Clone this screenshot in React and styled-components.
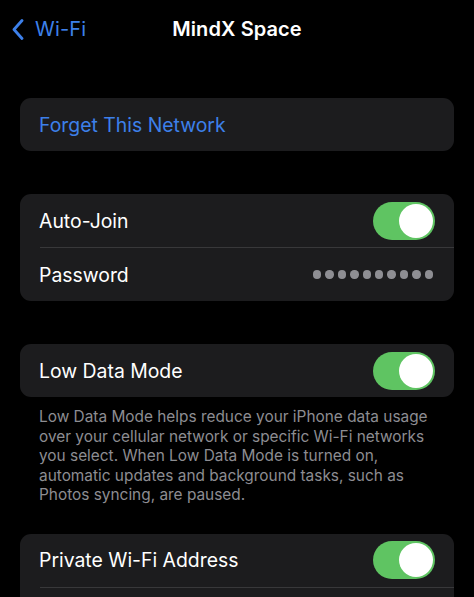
import React from 'react';
import styled, { createGlobalStyle } from 'styled-components';

const GlobalStyle = createGlobalStyle`
    html, body {
        margin: 0;
        padding: 0;
        background: #000;
    }
    body {
        font-family: Inter, "Noto Sans", "Liberation Sans", sans-serif;
        color: #fff;
        -webkit-font-smoothing: antialiased;
    }
`;

const Screen = styled.div`
    width: 474px;
    height: 597px;
    overflow: hidden;
    background: #000;
`;

const NavBar = styled.div`
    height: 58px;
    display: grid;
    grid-template-columns: 1fr auto 1fr;
    align-items: center;
    padding: 0 12px;
`;

const BackLink = styled.div`
    display: flex;
    align-items: center;
    gap: 11px;
    color: #3d80ea;
    font-size: 20px;
    letter-spacing: 0.2px;
`;

const Title = styled.div`
    font-size: 20px;
    font-weight: 600;
    letter-spacing: 0.1px;
`;

const Content = styled.div`
    padding: 40px 20px 0;
    display: flex;
    flex-direction: column;
`;

const Group = styled.div`
    margin-bottom: ${p => p.$gap || 43}px;
`;

const Card = styled.div`
    background: #1c1c1e;
    border-radius: 11px;
    overflow: hidden;
`;

const Row = styled.div`
    height: 53px;
    display: flex;
    align-items: center;
    justify-content: space-between;
    padding: 0 19px;
    font-size: 19.4px;
    color: ${p => (p.$action ? '#3d80ea' : '#fff')};
`;

const Divider = styled.div`
    height: 1px;
    margin-left: 20px;
    background: #38383a;
`;

const Toggle = styled.div`
    width: 62px;
    height: 38px;
    border-radius: 19px;
    background: #5fc462;
    position: relative;
    flex-shrink: 0;

    &::after {
        content: '';
        position: absolute;
        top: 2px;
        right: 2px;
        width: 34px;
        height: 34px;
        border-radius: 50%;
        background: #fff;
    }
`;

const Dots = styled.div`
    display: flex;
    gap: 4px;
    margin-right: 2px;
`;

const Dot = styled.span`
    width: 8.4px;
    height: 8.4px;
    border-radius: 50%;
    background: #8e8e93;
`;

const Footnote = styled.p`
    margin: 0;
    padding: 10px 19px 0;
    font-size: 15.4px;
    line-height: 19.5px;
    color: #8d8d92;
`;

const Chevron = () => (
    <svg width="12" height="21" viewBox="0 0 12 21" fill="none">
        <path d="M10 1.5L2 10.5L10 19.5" stroke="#3d80ea" strokeWidth="2.8" strokeLinecap="round" strokeLinejoin="round" />
    </svg>
);

const App = () => {
    return (
        <>
            <GlobalStyle />
            <Screen>
                <NavBar>
                    <BackLink>
                        <Chevron />
                        Wi-Fi
                    </BackLink>
                    <Title>MindX Space</Title>
                    <div />
                </NavBar>
                <Content>
                    <Group>
                        <Card>
                            <Row $action>Forget This Network</Row>
                        </Card>
                    </Group>

                    <Group>
                        <Card>
                            <Row>
                                Auto-Join
                                <Toggle />
                            </Row>
                            <Divider />
                            <Row>
                                Password
                                <Dots>
                                    {Array.from({ length: 10 }).map((_, i) => <Dot key={i} />)}
                                </Dots>
                            </Row>
                        </Card>
                    </Group>

                    <Group $gap={29}>
                        <Card>
                            <Row>
                                Low Data Mode
                                <Toggle />
                            </Row>
                        </Card>
                        <Footnote>
                            Low Data Mode helps reduce your iPhone data usage over your cellular network or specific Wi-Fi networks you select. When Low Data Mode is turned on, automatic updates and background tasks, such as Photos syncing, are paused.
                        </Footnote>
                    </Group>

                    <Group>
                        <Card>
                            <Row>
                                Private Wi-Fi Address
                                <Toggle />
                            </Row>
                            <Divider />
                            <Row />
                        </Card>
                    </Group>
                </Content>
            </Screen>
        </>
    );
};

export default App;
